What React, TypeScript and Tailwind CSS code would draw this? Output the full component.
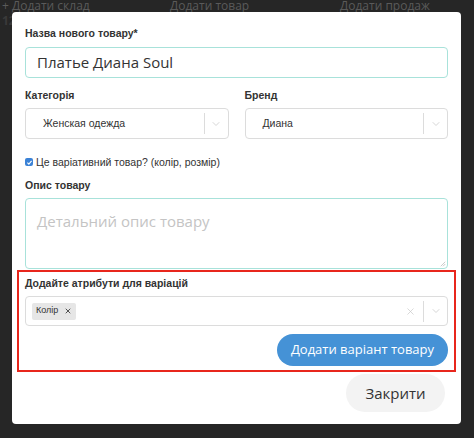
import { ChevronDown, X } from "lucide-react";

const font = { fontFamily: '"Open Sans", "Noto Sans", sans-serif' };
const arial = { fontFamily: '"Liberation Sans", Arial, sans-serif' };

function Select({ value }: { value: string }) {
  return (
    <div className="flex h-[31px] items-center rounded border border-[#dcdcdc] bg-white">
      <span className="flex-1 pl-[17px] text-[10.5px] text-[#333]" style={arial}>
        {value}
      </span>
      <span className="h-[21px] w-px bg-[#dcdcdc]" />
      <span className="flex w-[23px] justify-center">
        <ChevronDown className="h-3 w-3 text-[#c8c8c8]" strokeWidth={1.5} />
      </span>
    </div>
  );
}

function Label({ children, className = "" }: { children: React.ReactNode; className?: string }) {
  return (
    <label className={`text-[10.5px] font-bold leading-[14px] text-[#333] ${className}`} style={arial}>
      {children}
    </label>
  );
}

export default function App() {
  return (
    <div className="relative h-[438px] w-[474px] overflow-hidden bg-[#262626]" style={font}>
      <div className="flex pt-0 text-[12px] leading-[12px] text-[#5a5a5a]">
        <span className="w-[170px] pl-[2px]">+ Додати склад</span>
        <span className="w-[170px]">Додати товар</span>
        <span>Додати продаж</span>
      </div>
      <div className="pl-[2px] pt-[2px] text-[12px] font-bold leading-[14px] text-[#3a3a3a]">12</div>

      <div className="absolute left-[12px] top-[12px] flex h-[412px] w-[449px] flex-col rounded-[4px] bg-white px-[13px] pt-[14px]">
        <Label>Назва нового товару*</Label>
        <div className="mt-[7px] flex h-[31px] items-center rounded border border-[#a8e2da] px-[11px] text-[15px] text-[#333]">
          Платье Диана Soul
        </div>

        <div className="mt-[10px] grid grid-cols-2 gap-[16px]">
          <div className="flex flex-col">
            <Label>Категорія</Label>
            <div className="mt-[6px]">
              <Select value="Женская одежда" />
            </div>
          </div>
          <div className="flex flex-col">
            <Label>Бренд</Label>
            <div className="mt-[6px]">
              <Select value="Диана" />
            </div>
          </div>
        </div>

        <div className="mt-[16px] flex items-center gap-[3px] text-[10.5px] leading-[14px] text-[#333]" style={arial}>
          <span className="flex h-[8px] w-[8px] items-center justify-center rounded-[2px] bg-[#3b82d6]">
            <svg viewBox="0 0 10 10" className="h-[7px] w-[7px]">
              <path d="M2 5.2 4.1 7.3 8 2.8" fill="none" stroke="white" strokeWidth="1.6" />
            </svg>
          </span>
          Це варіативний товар? (колір, розмір)
        </div>

        <Label className="mt-[9px]">Опис товару</Label>
        <div className="relative mt-[6px] h-[71px] rounded border border-[#a8e2da] px-[11px] pt-[12px] text-[15px] leading-[20px] text-[#c4c4c4]">
          Детальний опис товару
          <svg viewBox="0 0 8 8" className="absolute bottom-[1px] right-[1px] h-[6px] w-[6px]">
            <path d="M7 1 1 7M7 4 4 7" stroke="#aaa" strokeWidth="0.8" />
          </svg>
        </div>

        <div className="-mx-[8px] mt-[1px] flex flex-col border-2 border-[#e8261c] px-[6px] pb-[4px] pt-[4px]">
          <Label>Додайте атрибути для варіацій</Label>
          <div className="mt-[6px] flex h-[30px] items-center rounded border border-[#dcdcdc] bg-white pl-[6px]">
            <span className="flex h-[17px] items-center gap-[6px] rounded-[2px] bg-[#e6e6e6] px-[4px] text-[9px] text-[#333]" style={arial}>
              Колір
              <X className="h-[8px] w-[8px]" strokeWidth={2.5} />
            </span>
            <span className="flex-1" />
            <X className="mr-[7px] h-[11px] w-[11px] text-[#c8c8c8]" strokeWidth={1.5} />
            <span className="h-[21px] w-px bg-[#dcdcdc]" />
            <span className="flex w-[23px] justify-center">
              <ChevronDown className="h-3 w-3 text-[#c8c8c8]" strokeWidth={1.5} />
            </span>
          </div>
          <div className="mt-[8px] flex justify-end">
            <button className="h-[32px] w-[171px] rounded-full bg-[#4592d6] text-[13px] text-white">
              Додати варіант товару
            </button>
          </div>
        </div>

        <div className="mt-[2px] flex justify-end pr-[3px]">
          <button className="h-[38px] w-[99px] rounded-full bg-[#f3f3f3] text-[15px] text-[#333]">Закрити</button>
        </div>
      </div>
    </div>
  );
}
